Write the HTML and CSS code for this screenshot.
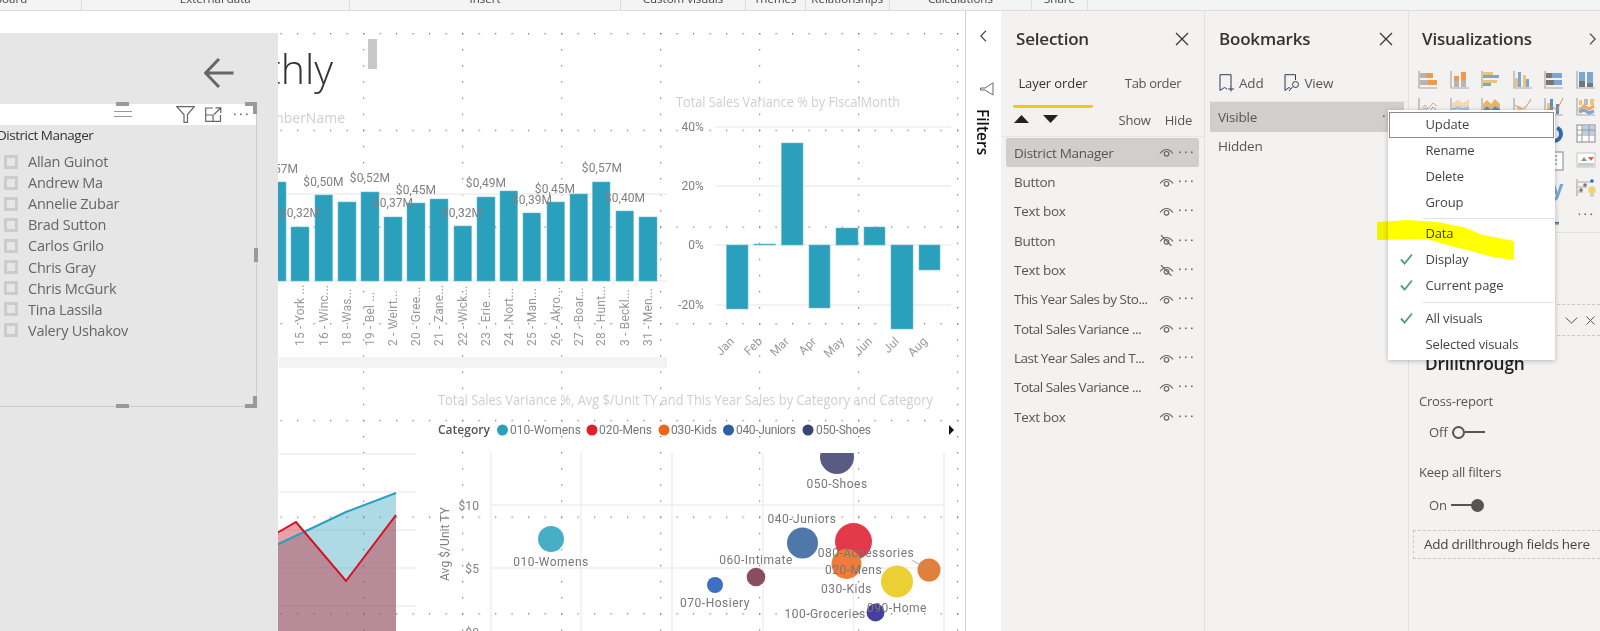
FILE: index.html
```html
<!DOCTYPE html>
<html lang="en">
<head>
<meta charset="utf-8">
<title>Power BI Desktop - Bookmarks</title>
<link rel="stylesheet" href="styles.css">
</head>
<body>
<svg class="defs" width="0" height="0" aria-hidden="true">
  <symbol id="eye" viewBox="0 0 15 11"><path d="M1 6.5Q7.5-1.5 14 6.5" fill="none" stroke="#666" stroke-width="1.1"/><circle cx="7.5" cy="6.8" r="2.3" fill="none" stroke="#666" stroke-width="1.1"/></symbol>
  <symbol id="eye-off" viewBox="0 0 15 11"><path d="M1 6.5Q7.5-1.5 14 6.5" fill="none" stroke="#666" stroke-width="1.1"/><circle cx="7.5" cy="6.8" r="2.3" fill="none" stroke="#666" stroke-width="1.1"/><path d="M2 0 12.5 11" stroke="#666" stroke-width="1.1"/></symbol>
  <symbol id="dots" viewBox="0 0 14 3"><rect x="0" y="0.5" width="1.6" height="1.6" fill="#666"/><rect x="6" y="0.5" width="1.6" height="1.6" fill="#666"/><rect x="12" y="0.5" width="1.6" height="1.6" fill="#666"/></symbol>
  <symbol id="close" viewBox="0 0 14 14"><path d="M1 1 13 13M13 1 1 13" stroke="#333" stroke-width="1.2" fill="none"/></symbol>
  <symbol id="check" viewBox="0 0 13 12"><path d="M1 6.5 4.6 10.5 12 1.5" stroke="#5c9c8a" stroke-width="1.9" fill="none"/></symbol>
</svg>

<header class="ribbon">
  <div class="rb rb-clip"><span>Clipboard</span></div>
  <div class="rb rb-ext"><span>External data</span></div>
  <div class="rb rb-ins"><span>Insert</span></div>
  <div class="rb rb-cus"><span>Custom visuals</span></div>
  <div class="rb rb-the"><span>Themes</span></div>
  <div class="rb rb-rel"><span>Relationships</span></div>
  <div class="rb rb-cal"><span>Calculations</span></div>
  <div class="rb rb-sha"><span>Share</span></div>
</header>

<main class="main">
  <section class="canvas">
    <svg class="report" width="965" height="620" viewBox="0 11 965 620">
      <defs>
        <pattern id="dotrow" x="264" y="33" width="16.5" height="96.7" patternUnits="userSpaceOnUse"><rect width="1.3" height="1.3" fill="#808080"/></pattern>
        <pattern id="dotcol" x="363" y="33" width="99" height="16.12" patternUnits="userSpaceOnUse"><rect width="1.3" height="1.3" fill="#808080"/></pattern>
        <clipPath id="plotclip"><rect x="480" y="453" width="470" height="178"/></clipPath>
      </defs>
      <rect x="264" y="33" width="696" height="598" fill="url(#dotrow)"/>
      <rect x="363" y="33" width="597" height="598" fill="url(#dotcol)"/>

      <rect class="scrollthumb" x="368" y="39" width="9" height="30"/>
      <text class="title-big" x="333" y="84" text-anchor="end">Monthly</text>
      <text class="vis-title" x="345" y="123" text-anchor="end">Sales by StoreNumberName</text>

      <!-- store bars -->
      <path class="grid" d="M279 194H667M279 281H667"/>
      <g class="bar">
        <rect x="268" y="182" width="18" height="99"/><rect x="291" y="227" width="18" height="54"/><rect x="315" y="195" width="17.5" height="86"/><rect x="338" y="202" width="18" height="79"/><rect x="361" y="192" width="18" height="89"/><rect x="384" y="217" width="18" height="64"/><rect x="407" y="203" width="18" height="78"/><rect x="430" y="199" width="18" height="82"/><rect x="454" y="226" width="17.5" height="55"/><rect x="477" y="197" width="18" height="84"/><rect x="500" y="191" width="17.5" height="90"/><rect x="523" y="213" width="17.5" height="68"/><rect x="547" y="202" width="17.5" height="79"/><rect x="570" y="194" width="17.5" height="87"/><rect x="592.5" y="182" width="17.5" height="99"/><rect x="616" y="211" width="17.5" height="70"/><rect x="639" y="217" width="18" height="64"/>
      </g>
      <g class="data-label" text-anchor="middle">
        <text x="278" y="173">$0,57M</text><text x="300" y="217">$0,32M</text><text x="323.5" y="186">$0,50M</text><text x="370" y="182">$0,52M</text><text x="393" y="207">$0,37M</text><text x="416" y="194">$0,45M</text><text x="462" y="217">$0,32M</text><text x="486" y="187">$0,49M</text><text x="532" y="204">$0,39M</text><text x="555" y="193">$0,45M</text><text x="602" y="172">$0,57M</text><text x="625" y="202">$0,40M</text>
      </g>
      <g class="axis-label">
        <text transform="translate(304 346) rotate(-90)">15 - York ...</text><text transform="translate(327.500 346) rotate(-90)">16 - Winc...</text><text transform="translate(351 346) rotate(-90)">18 - Was...</text><text transform="translate(374 346) rotate(-90)">19 - Bel ...</text><text transform="translate(397 346) rotate(-90)">2 - Weirt...</text><text transform="translate(420 346) rotate(-90)">20 - Gree...</text><text transform="translate(443 346) rotate(-90)">21 - Zane...</text><text transform="translate(466.500 346) rotate(-90)">22 - Wick...</text><text transform="translate(490 346) rotate(-90)">23 - Erie ...</text><text transform="translate(513 346) rotate(-90)">24 - Nort...</text><text transform="translate(536 346) rotate(-90)">25 - Man...</text><text transform="translate(559.500 346) rotate(-90)">26 - Akro...</text><text transform="translate(583 346) rotate(-90)">27 - Boar...</text><text transform="translate(605 346) rotate(-90)">28 - Hunt...</text><text transform="translate(629 346) rotate(-90)">3 - Beckl...</text><text transform="translate(652 346) rotate(-90)">31 - Men...</text>
      </g>
      <rect class="hscroll" x="279" y="357" width="388" height="11"/>

      <!-- variance by month -->
      <text class="vis-title" x="676" y="107" textLength="224" lengthAdjust="spacingAndGlyphs">Total Sales Variance % by FiscalMonth</text>
      <path class="grid" d="M715 127H951M715 186H951M715 245H951M715 305H951"/>
      <g class="data-label" text-anchor="end">
        <text x="704" y="131">40%</text><text x="704" y="190">20%</text><text x="704" y="249">0%</text><text x="704" y="309">-20%</text>
      </g>
      <g class="bar">
        <rect x="726.500" y="245" width="21.5" height="64"/><rect x="754" y="244" width="21.500" height="1"/><rect x="781.500" y="143" width="21.500" height="102"/><rect x="809" y="245" width="21" height="63"/><rect x="836" y="228" width="22" height="17"/><rect x="864" y="227" width="21" height="18"/><rect x="891" y="245" width="22" height="84"/><rect x="919" y="245" width="21" height="25"/>
      </g>
      <g class="data-label month-label" text-anchor="end">
        <text transform="translate(735 342) rotate(-45)">Jan</text><text transform="translate(763 342) rotate(-45)">Feb</text><text transform="translate(790 342) rotate(-45)">Mar</text><text transform="translate(817 342) rotate(-45)">Apr</text><text transform="translate(845 342) rotate(-45)">May</text><text transform="translate(873 342) rotate(-45)">Jun</text><text transform="translate(900 342) rotate(-45)">Jul</text><text transform="translate(928 342) rotate(-45)">Aug</text>
      </g>

      <!-- area chart -->
      <path class="grid" d="M279 454H416M279 492H416M279 530H416M279 568H416M279 606H416"/>
      <polygon class="area-teal" points="270,548 346,512 396,493 396,631 270,631"/>
      <polygon class="area-red" points="270,537 296,522 346,581 396,515 396,631 270,631"/>
      <polyline class="line-teal" points="270,548 346,512 396,493"/>
      <polyline class="line-red" points="270,537 296,522 346,581 396,515"/>

      <!-- scatter -->
      <text class="vis-title" x="438" y="405" textLength="495" lengthAdjust="spacingAndGlyphs">Total Sales Variance %, Avg $/Unit TY and This Year Sales by Category and Category</text>
      <text class="legend-head" x="438" y="434">Category</text>
      <circle cx="502.500" cy="430" r="5.500" fill="#2ba0bd"/><text class="legend" x="510" y="434" textLength="71">010-Womens</text>
      <circle cx="592" cy="430" r="5.500" fill="#e01f2d"/><text class="legend" x="599" y="434" textLength="53">020-Mens</text>
      <circle cx="664" cy="430" r="5.500" fill="#ee6518"/><text class="legend" x="671" y="434" textLength="46">030-Kids</text>
      <circle cx="728.500" cy="430" r="5.500" fill="#2f5f9e"/><text class="legend" x="736" y="434" textLength="60">040-Juniors</text>
      <circle cx="808" cy="430" r="5.500" fill="#3a4575"/><text class="legend" x="816" y="434" textLength="55">050-Shoes</text>
      <polygon points="949,425 954,430 949,435" fill="#111"/>
      <path class="grid" d="M491 453V631M581 453V631M672 453V631M763 453V631M853.500 453V631M944 453V631M491 505H944M491 568H944"/>
      <g class="data-label" text-anchor="end">
        <text x="479" y="510">$10</text><text x="479" y="573">$5</text><text x="479" y="637">$0</text>
      </g>
      <text class="data-label" transform="translate(449 581) rotate(-90)" textLength="74">Avg $/Unit TY</text>
      <g clip-path="url(#plotclip)">
        <circle cx="837" cy="457" r="17" fill="#5a5b83"/>
        <circle cx="551" cy="539" r="13" fill="#46aec6"/>
        <circle cx="802.500" cy="543" r="15.500" fill="#5077aa"/>
        <circle cx="853.500" cy="541.500" r="18.500" fill="#e23a48"/>
        <circle cx="846.500" cy="564" r="15" fill="#f07b3a"/>
        <circle cx="929" cy="570" r="11.500" fill="#e0803a"/>
        <circle cx="897" cy="581.500" r="16" fill="#eccf35"/>
        <circle cx="756" cy="577" r="9.300" fill="#8a4d5e"/>
        <circle cx="715" cy="585" r="8" fill="#3f6fc5"/>
        <circle cx="875.500" cy="612.500" r="9" fill="#453fa0"/>
      </g>
      <path d="M912 560 929 570" stroke="#999" stroke-width="0.800"/>
      <g class="bubble-label" text-anchor="middle">
        <text x="837" y="488">050-Shoes</text><text x="551" y="566">010-Womens</text><text x="802" y="523">040-Juniors</text><text x="756" y="564">060-Intimate</text><text x="866" y="557">080-Accessories</text><text x="853.500" y="574">020-Mens</text><text x="846.500" y="593">030-Kids</text><text x="715" y="607">070-Hosiery</text><text x="825" y="618">100-Groceries</text><text x="897" y="612">090-Home</text>
      </g>
    </svg>

    <div class="overlay">
      <svg class="back-arrow" width="30" height="30" viewBox="0 0 30 30"><path d="M15 1 1.500 15 15 29M1.500 15H29.500" fill="none" stroke="#666" stroke-width="3"/></svg>
      <div class="slicer">
        <div class="slicer-head">
          <svg class="grip" width="18" height="7" viewBox="0 0 18 7"><path d="M0 .5H18M0 5.500H18" stroke="#999" stroke-width="1"/></svg>
          <svg class="filter-ic" width="19" height="17" viewBox="0 0 19 17"><path d="M.7.7H18.300L11.500 8.500V16.300H8V8.500Z" fill="none" stroke="#666" stroke-width="1.200"/></svg>
          <svg class="focus-ic" width="17" height="15" viewBox="0 0 17 15"><path d="M15.500 8V14.300H.7V1H8M.7 8H8V14.300M10.500.8H15.800V6M15.800.8 9 7.500" fill="none" stroke="#666" stroke-width="1.200"/></svg>
          <svg class="more-ic" width="16" height="3" viewBox="0 0 14 3"><use href="#dots"/></svg>
        </div>
        <div class="slicer-title">District Manager</div>
        <ul class="slicer-list">
          <li><i></i>Allan Guinot</li>
          <li><i></i>Andrew Ma</li>
          <li><i></i>Annelie Zubar</li>
          <li><i></i>Brad Sutton</li>
          <li><i></i>Carlos Grilo</li>
          <li><i></i>Chris Gray</li>
          <li><i></i>Chris McGurk</li>
          <li><i></i>Tina Lassila</li>
          <li><i></i>Valery Ushakov</li>
        </ul>
        <b class="h h-top"></b><b class="h h-right"></b><b class="h h-bottom"></b>
        <b class="c c-tr1"></b><b class="c c-tr2"></b><b class="c c-br1"></b><b class="c c-br2"></b>
      </div>
    </div>
  </section>

  <aside class="rail">
    <svg class="rail-chev" width="7" height="12" viewBox="0 0 7 12"><path d="M6 .7.9 6 6 11.300" fill="none" stroke="#444" stroke-width="1.200"/></svg>
    <svg class="rail-filter" width="14" height="14" viewBox="0 0 14 14"><path d="M13 .8V13L5 8H.5V6H5Z" fill="none" stroke="#666" stroke-width="1"/></svg>
    <div class="rail-text">Filters</div>
  </aside>

  <section class="pane">
    <div class="pane-head"><h2>Selection</h2><svg class="x" width="14" height="14"><use href="#close"/></svg></div>
    <div class="tabs"><span class="tab tab-on">Layer order</span><span class="tab tab-off">Tab order</span></div>
    <div class="sel-tools">
      <svg class="tri" width="15" height="8" viewBox="0 0 15 8"><path d="M7.500 0 15 8H0Z" fill="#222"/></svg>
      <svg class="tri tri2" width="15" height="8" viewBox="0 0 15 8"><path d="M0 0H15L7.500 8Z" fill="#222"/></svg>
      <span class="show">Show</span><span class="hide">Hide</span>
    </div>
    <ul class="layers">
      <li class="on"><span>District Manager</span><svg class="eye" width="15" height="11"><use href="#eye"/></svg><svg class="dot3" width="14" height="3"><use href="#dots"/></svg></li>
      <li><span>Button</span><svg class="eye" width="15" height="11"><use href="#eye"/></svg><svg class="dot3" width="14" height="3"><use href="#dots"/></svg></li>
      <li><span>Text box</span><svg class="eye" width="15" height="11"><use href="#eye"/></svg><svg class="dot3" width="14" height="3"><use href="#dots"/></svg></li>
      <li><span>Button</span><svg class="eye" width="15" height="11"><use href="#eye-off"/></svg><svg class="dot3" width="14" height="3"><use href="#dots"/></svg></li>
      <li><span>Text box</span><svg class="eye" width="15" height="11"><use href="#eye-off"/></svg><svg class="dot3" width="14" height="3"><use href="#dots"/></svg></li>
      <li><span class="tight">This Year Sales by Sto...</span><svg class="eye" width="15" height="11"><use href="#eye"/></svg><svg class="dot3" width="14" height="3"><use href="#dots"/></svg></li>
      <li><span class="tight">Total Sales Variance ...</span><svg class="eye" width="15" height="11"><use href="#eye"/></svg><svg class="dot3" width="14" height="3"><use href="#dots"/></svg></li>
      <li><span class="tight">Last Year Sales and T...</span><svg class="eye" width="15" height="11"><use href="#eye"/></svg><svg class="dot3" width="14" height="3"><use href="#dots"/></svg></li>
      <li><span class="tight">Total Sales Variance ...</span><svg class="eye" width="15" height="11"><use href="#eye"/></svg><svg class="dot3" width="14" height="3"><use href="#dots"/></svg></li>
      <li><span>Text box</span><svg class="eye" width="15" height="11"><use href="#eye"/></svg><svg class="dot3" width="14" height="3"><use href="#dots"/></svg></li>
    </ul>
  </section>

  <section class="pane">
    <div class="pane-head pane-head-b"><h2>Bookmarks</h2><svg class="x" width="14" height="14"><use href="#close"/></svg></div>
    <div class="bm-tools">
      <svg width="15" height="18" viewBox="0 0 15 18"><path d="M1 16.500V.7H12V13M1 16.500 5.500 13.500 8 15M9 15H15M12 12.500V17.500" fill="none" stroke="#2b3a55" stroke-width="1"/></svg><span class="bm-add">Add</span>
      <svg class="bm-view-ic" width="16" height="18" viewBox="0 0 16 18"><path d="M1 16.500V.7H11.500V6M1 16.500 5 13.500 6.500 14.500M5 17 8.500 13" fill="none" stroke="#2b3a55" stroke-width="1"/><circle cx="11.500" cy="10.500" r="3" fill="none" stroke="#2b3a55" stroke-width="1"/></svg><span>View</span>
    </div>
    <ul class="bookmarks">
      <li class="on"><span>Visible</span><svg class="dot3" width="14" height="3"><use href="#dots"/></svg></li>
      <li><span>Hidden</span></li>
    </ul>
  </section>

  <section class="pane pane-viz">
    <div class="pane-head pane-head-v"><h2>Visualizations</h2><svg class="x" width="7" height="12" viewBox="0 0 7 12"><path d="M1 .7 6.100 6 1 11.300" fill="none" stroke="#444" stroke-width="1.200"/></svg></div>
    <div class="viz-grid">
      <svg viewBox="0 0 20 20"><path class="ax" d="M1 1V18H19"/><rect x="2" y="3" width="6" height="5" fill="#b5b5b5"/><rect x="8" y="3" width="7" height="5" fill="#ee9a50"/><rect x="2" y="10" width="8" height="5" fill="#b5b5b5"/><rect x="10" y="10" width="9" height="5" fill="#ee9a50"/></svg>
      <svg viewBox="0 0 20 20"><path class="ax" d="M1 1V18H19"/><rect x="4" y="11" width="5" height="6" fill="#b5b5b5"/><rect x="4" y="6" width="5" height="5" fill="#ee9a50"/><rect x="11" y="10" width="5" height="7" fill="#b5b5b5"/><rect x="11" y="2" width="5" height="8" fill="#ee9a50"/></svg>
      <svg viewBox="0 0 20 20"><path class="ax" d="M1 1V18"/><rect x="2" y="2" width="10" height="3" fill="#ecc27c"/><rect x="2" y="5" width="16" height="3" fill="#7da7d3"/><rect x="2" y="10" width="14" height="3" fill="#ecc27c"/><rect x="2" y="13" width="8" height="3" fill="#7da7d3"/></svg>
      <svg viewBox="0 0 20 20"><path class="ax" d="M1 1V18H19"/><rect x="2" y="8" width="3" height="9" fill="#ecc27c"/><rect x="5" y="2" width="3" height="15" fill="#7da7d3"/><rect x="10" y="5" width="3" height="12" fill="#ecc27c"/><rect x="13" y="9" width="3" height="8" fill="#7da7d3"/></svg>
      <svg viewBox="0 0 20 20"><path class="ax" d="M1 1V18H19"/><rect x="2" y="3" width="6" height="5" fill="#777"/><rect x="8" y="3" width="10" height="5" fill="#7da7d3"/><rect x="2" y="10" width="8" height="5" fill="#777"/><rect x="10" y="10" width="8" height="5" fill="#7da7d3"/></svg>
      <svg viewBox="0 0 20 20"><path class="ax" d="M1 1V18H19"/><rect x="3" y="2" width="6" height="9" fill="#7da7d3"/><rect x="3" y="11" width="6" height="6" fill="#777"/><rect x="11" y="2" width="6" height="11" fill="#7da7d3"/><rect x="11" y="13" width="6" height="4" fill="#777"/></svg>

      <svg viewBox="0 0 20 20"><path class="ax" d="M1 1V18H19"/><path d="M2 14 7 8 10 12 15 6 19 9" fill="none" stroke="#e3a878" stroke-width="1"/><path d="M2 16 7 11 11 15 15 10 19 14" fill="none" stroke="#7da7d3" stroke-width="1"/></svg>
      <svg viewBox="0 0 20 20"><path class="ax" d="M1 1V18H19"/><path d="M2 6 8 3 13 6 19 2V9L13 11 8 9 2 11Z" fill="#f3d9b1"/><path d="M2 11 8 9 13 11 19 9V13L13 15 8 12 2 15Z" fill="#a9c4e0"/></svg>
      <svg viewBox="0 0 20 20"><path class="ax" d="M1 1V18H19"/><path d="M2 7 6 3 10 7 14 2 19 7V12L14 9 10 13 6 9 2 13Z" fill="#eab560"/><path d="M2 13 6 9 10 13 14 9 19 12V17H2Z" fill="#5f8fc0"/></svg>
      <svg viewBox="0 0 20 20"><path class="ax" d="M1 1V18H19"/><rect x="4" y="9" width="4" height="8" fill="#f0c7a8"/><rect x="10" y="12" width="4" height="5" fill="#f0c7a8"/><path d="M2 8 8 12 13 10 18 2" fill="none" stroke="#e58a55" stroke-width="1"/></svg>
      <svg viewBox="0 0 20 20"><path class="ax" d="M1 1V18H19"/><rect x="3" y="6" width="3" height="11" fill="#ecc27c"/><rect x="6" y="2" width="3" height="15" fill="#5f8fc0"/><rect x="12" y="7" width="3" height="10" fill="#5f8fc0"/><path d="M2 14 9 10 13 13 19 1" fill="none" stroke="#e58a55" stroke-width="1"/></svg>
      <svg viewBox="0 0 20 20"><path class="ax" d="M1 1V18H19"/><rect x="3" y="3" width="3" height="5" fill="#ecc27c"/><rect x="8" y="2" width="4" height="6" fill="#bbb"/><rect x="14" y="2" width="4" height="6" fill="#ecc27c"/><path d="M3 13 8 9 13 12 18 9" stroke="#f0a860" stroke-width="3" fill="none"/><path d="M3 15 8 13 13 16 18 14" stroke="#7da7d3" stroke-width="3" fill="none"/></svg>

      <span></span><span></span><span></span><span></span>
      <svg viewBox="0 0 20 20"><circle cx="10" cy="10" r="7" fill="none" stroke="#2f6db0" stroke-width="4" stroke-dasharray="14 4"/></svg>
      <svg viewBox="0 0 20 20"><rect x="1" y="1" width="18" height="17" fill="#fff" stroke="#999" stroke-width="1.200"/><rect x="6" y="2" width="12" height="8" fill="#b7cfe8"/><path d="M1 6H19M1 11H19M6 1V18M13 1V18" stroke="#999" stroke-width="1"/></svg>

      <span></span><span></span><span></span><span></span>
      <svg viewBox="0 0 20 20"><rect x="1" y="1" width="18" height="18" fill="#fff" stroke="#999" stroke-width="1.200"/><path d="M9 5H13M9 9H13M9 13H13" stroke="#7da7d3" stroke-width="1.500"/></svg>
      <svg viewBox="0 0 20 20"><rect x="1" y="2" width="18" height="14" fill="#fff" stroke="#ccc" stroke-width="1.200"/><rect x="2" y="12" width="16" height="3.500" fill="#ccc"/><path d="M5 10 8 6 11 10Z" fill="#5fae7f"/><path d="M12 6H18L15 10Z" fill="#e0604f"/></svg>

      <span></span><span></span><span></span><span></span>
      <span class="py">Py</span>
      <svg viewBox="0 0 20 20"><path d="M1 1V18" class="ax"/><path d="M2 4H15M2 9H11M2 14H7" stroke="#aaa" fill="none"/><circle cx="16" cy="3" r="1.800" fill="#2f6db0"/><circle cx="9" cy="7" r="1.800" fill="#777"/><circle cx="5" cy="12" r="1.800" fill="#777"/><circle cx="16" cy="12" r="3.800" fill="#f0d277"/><rect x="14" y="16" width="4" height="2.500" fill="#ccc"/></svg>

      <span></span><span></span><span></span><span></span>
      <svg viewBox="0 0 20 20"><rect x="7" y="3" width="3" height="14" fill="#eee"/><rect x="12" y="1" width="3" height="16" fill="#eee"/><rect x="1" y="14" width="5" height="3" fill="#f2c811"/><rect x="1" y="17" width="14" height="1.500" fill="#2f6db0"/><rect x="1" y="18.500" width="14" height="1" fill="#3a9e6b"/></svg>
      <svg class="viz-more" viewBox="0 0 14 3"><use href="#dots"/></svg>
    </div>
    <div class="viz-divider"></div>
    <div class="drill-strip">
      <svg width="13" height="7" viewBox="0 0 13 7"><path d="M.7.7 6.500 6 12.300.7" fill="none" stroke="#555" stroke-width="1"/></svg>
      <svg width="9" height="9" viewBox="0 0 9 9"><path d="M.5.5 8.500 8.500M8.500.5.5 8.500" fill="none" stroke="#555" stroke-width="1"/></svg>
    </div>
    <h3 class="drill-title">Drillthrough</h3>
    <div class="field-label field-first">Cross-report</div>
    <div class="toggle"><span class="toggle-text">Off</span><i class="knob-off"></i><i class="track track-off"></i></div>
    <div class="field-label field-second">Keep all filters</div>
    <div class="toggle toggle-on"><span class="toggle-text">On</span><i class="track track-on"></i><i class="knob-on"></i></div>
    <div class="drop">Add drillthrough fields here</div>
  </section>

  <nav class="menu">
    <div class="item focus"><span class="slot"></span>Update</div>
    <div class="item"><span class="slot"></span>Rename</div>
    <div class="item"><span class="slot"></span>Delete</div>
    <div class="item"><span class="slot"></span>Group</div>
    <div class="sep sep-a"></div>
    <div class="item"><span class="slot"></span>Data</div>
    <div class="item"><svg class="slot" width="13" height="12"><use href="#check"/></svg>Display</div>
    <div class="item"><svg class="slot" width="13" height="12"><use href="#check"/></svg>Current page</div>
    <div class="sep sep-b"></div>
    <div class="item"><svg class="slot" width="13" height="12"><use href="#check"/></svg>All visuals</div>
    <div class="item"><span class="slot"></span>Selected visuals</div>
  </nav>
  <svg class="marker" width="140" height="42" viewBox="0 0 140 42"><polygon points="1,3 31,1 61,3 87,8 107,16 138,22 138,41 117,38 91,31 71,26 51,20 1,21" fill="#ffff00"/></svg>
</main>
</body>
</html>
```

FILE: styles.css
```css
* { box-sizing: border-box; }
html, body { margin: 0; padding: 0; height: 631px; overflow: hidden; background: #fff; }
body { font-family: "Open Sans", "Liberation Sans", sans-serif; color: #333; }
ul { list-style: none; margin: 0; padding: 0; }
h2, h3 { margin: 0; }
.defs { display: block; height: 0; }

.ribbon { display: flex; height: 11px; background: #f3f4f5; border-bottom: 1px solid #dcdcdc; overflow: hidden; font-size: 11.5px; color: #444; }
.rb { border-right: 1px solid #dcdcdc; text-align: center; line-height: 14px; height: 10px; }
.rb span { display: block; margin-top: -8px; }
.rb-clip { width: 81.5px; text-align: left; }
.rb-clip span { margin-left: -25px; }
.rb-ext { width: 268.5px; }
.rb-ins { width: 271px; }
.rb-cus { width: 125px; }
.rb-the { width: 59.5px; }
.rb-rel { width: 84.5px; }
.rb-cal { width: 142px; }
.rb-sha { width: 56px; }

.main { position: relative; display: flex; height: 620px; }
.canvas { position: relative; width: 965px; flex: none; overflow: hidden; }
.report { display: block; }
.report text { font-family: "Roboto", "Liberation Sans", sans-serif; }
.scrollthumb { fill: #c8c8c8; }
.report .title-big { font-family: "Open Sans", sans-serif; font-weight: 300; font-size: 41px; fill: #333; }
.report .vis-title { font-family: "Open Sans", sans-serif; font-size: 14px; fill: #cfcfcf; }
.grid { stroke: #eeeeee; stroke-width: 1.4; fill: none; }
.bar rect { fill: #2ba0bd; stroke: #6dbcd1; stroke-width: 0.6; }
.data-label { font-size: 12px; fill: #808080; letter-spacing: 0.1px; }
.month-label { fill: #999; }
.axis-label { font-size: 12px; fill: #999; letter-spacing: 0.2px; }
.hscroll { fill: #f3f3f3; }
.area-teal { fill: #2ba0bd; fill-opacity: 0.39; }
.area-red { fill: #c8202f; fill-opacity: 0.42; }
.line-teal { fill: none; stroke: #2ba0bd; stroke-width: 2; }
.line-red { fill: none; stroke: #d7101f; stroke-width: 2; }
.report .legend-head { font-family: "Open Sans", sans-serif; font-size: 12px; font-weight: 600; fill: #555; }
.legend { font-size: 12px; fill: #777; }
.bubble-label { font-size: 12px; fill: #777; letter-spacing: 0.5px; }

.overlay { position: absolute; left: 0; top: 22px; bottom: 0; width: 278px; background: #e6e6e6; }
.back-arrow { display: block; margin: 25px 0 0 204px; }
.slicer { position: relative; width: 257px; height: 303px; margin-top: 16px; border-right: 1px solid #ccc; border-bottom: 1px solid #ccc; }
.slicer-head { display: flex; align-items: center; height: 21px; background: #fff; }
.grip { margin-left: 114px; }
.filter-ic { margin-left: 44px; }
.focus-ic { margin-left: 10px; }
.more-ic { margin-left: 11px; }
.slicer-title { height: 26px; margin-left: -3px; font-size: 13.5px; line-height: 20px; color: #333; letter-spacing: -0.48px; white-space: nowrap; }
.slicer-list li { display: flex; align-items: center; gap: 10px; height: 21.1px; padding-left: 4px; font-size: 14.5px; color: #666; letter-spacing: -0.25px; }
.slicer-list i { display: block; width: 14px; height: 14px; border: 3px solid #ccc; }
.h, .c { position: absolute; background: #999; }
.h-top { left: 116px; top: -2px; width: 13px; height: 4px; }
.h-bottom { left: 116px; bottom: -2px; width: 13px; height: 4px; }
.h-right { right: -2px; top: 144px; width: 4px; height: 14px; }
.c-tr1 { right: -1px; top: -2px; width: 12px; height: 4px; }
.c-tr2 { right: -1px; top: -2px; width: 4px; height: 12px; }
.c-br1 { right: -1px; bottom: -2px; width: 12px; height: 4px; }
.c-br2 { right: -1px; bottom: -2px; width: 4px; height: 12px; }

.rail { width: 36px; flex: none; border-left: 1px solid #cfcfcf; background: #fff; display: flex; flex-direction: column; }
.rail-chev { margin: 19px 0 0 14px; }
.rail-filter { margin: 40px 0 0 14px; }
.rail-text { align-self: flex-start; writing-mode: vertical-rl; margin: 13px 0 0 9px; font-size: 15.5px; font-weight: 600; line-height: 16px; color: #111; }

.pane { width: 204px; flex: none; height: 620px; background: #f3f2f1; border-right: 1px solid #e1e1e1; border-left: 0; }
.pane-viz { flex: none; width: 191px; border-right: 0; position: relative; overflow: hidden; }
.pane-head { display: flex; justify-content: space-between; align-items: center; height: 40px; padding: 15px 15px 0 15px; }
.pane-head h2 { font-size: 17px; font-weight: 600; color: #333; line-height: 23px; letter-spacing: -0.2px; }
.pane-head-b { padding: 15px 15px 0 14px; }
.pane-head-v { padding: 15px 4px 0 13px; }

.tabs { display: flex; height: 57px; padding: 23px 0 0 12px; align-items: flex-start; font-size: 13px; line-height: 18px; }
.tab { display: block; width: 80px; height: 34px; text-align: center; white-space: nowrap; }
.tab-on { border-bottom: 3px solid #f2c811; border-radius: 2px; color: #333; letter-spacing: -0.1px; }
.tab-off { margin-left: 20px; color: #555; letter-spacing: -0.35px; }
.sel-tools { display: flex; align-items: center; height: 29px; padding: 0 12px 4px 13px; border-bottom: 1px solid #e7e7e7; font-size: 13px; color: #555; }
.tri { margin-top: -2px; }
.tri2 { margin-left: 14px; }
.show { margin-left: auto; letter-spacing: -0.2px; }
.hide { margin-left: 14px; letter-spacing: -0.2px; }
.layers { padding-top: 1px; }
.layers li { display: flex; align-items: center; height: 29.35px; margin: 0 5px; padding: 0 6.500px 0 8px; font-size: 13.5px; color: #555; letter-spacing: -0.28px; border-radius: 2px; }
.layers li span { flex: 1; white-space: nowrap; }
.layers li span.tight { letter-spacing: -0.5px; }
.layers li.on { background: #d0cfcd; }
.eye { margin: 0 5px 0 0; flex: none; }
.dot3 { margin-top: -1px; flex: none; }

.bm-tools { display: flex; align-items: center; height: 51px; padding: 14px 0 0 14px; border-bottom: 1px solid #e7e7e7; font-size: 13.5px; color: #555; letter-spacing: -0.2px; }
.bm-add { margin-left: 5px; }
.bm-view-ic { margin: 0 4px 0 21px; }
.bookmarks { padding-top: 0; }
.bookmarks li { display: flex; align-items: center; justify-content: space-between; height: 29.5px; margin: 0 0 0 5px; padding: 0 7px 0 8px; font-size: 13.5px; color: #555; letter-spacing: -0.2px; }
.bookmarks li.on { background: #d0cfcd; margin-right: 4px; }

.viz-grid { display: grid; grid-template-columns: repeat(6, 31.6px); grid-auto-rows: 27px; padding: 19px 0 0 9px; height: 181px; }
.viz-grid svg { width: 20px; height: 20px; display: block; }
.ax { fill: none; stroke: #a8a8a8; stroke-width: 1.2; }
.viz-grid .viz-more { width: 15px; height: 3px; margin: 8px 0 0 2px; }
.py { font-size: 21px; font-weight: 700; color: #7da7d3; line-height: 20px; margin-left: -6px; white-space: nowrap; }
.viz-divider { border-top: 1px solid #e1e1e1; height: 72px; }
.drill-strip { display: flex; align-items: center; justify-content: flex-end; gap: 8px; height: 32px; margin-left: 4px; padding-right: 5px; border-top: 1px dashed #c8c8c8; border-bottom: 1px dashed #c8c8c8; }
.drill-title { margin: 17px 0 0 16px; font-size: 17.3px; font-weight: 600; line-height: 22px; color: #222; letter-spacing: -0.2px; }
.field-label { margin-left: 10px; font-size: 13px; line-height: 18px; color: #555; letter-spacing: -0.2px; white-space: nowrap; }
.field-first { margin-top: 17px; }
.field-second { margin-top: 20px; }
.toggle { display: flex; align-items: center; height: 22px; margin: 11px 0 0 20px; font-size: 13px; color: #555; }
.toggle-on { margin-top: 13px; }
.toggle-text { width: 20px; }
.knob-off { display: block; width: 13px; height: 13px; border: 2.5px solid #555; border-radius: 50%; margin-left: 3px; }
.track { display: block; height: 1.5px; background: #555; }
.track-off { width: 20px; }
.toggle-on .toggle-text { width: 22px; }
.track-on { width: 21px; }
.knob-on { display: block; width: 13px; height: 13px; background: #555; border-radius: 50%; margin-left: -1px; }
.drop { margin: 14px 0 0 4px; height: 29px; padding-left: 10px; border: 1px dashed #c8c8c8; border-right: 0; font-size: 13.5px; line-height: 27px; color: #444; letter-spacing: -0.25px; white-space: nowrap; overflow: hidden; }

.menu { position: absolute; left: 1388px; top: 99px; width: 167px; height: 250px; padding: 2px 1px; background: #fff; box-shadow: 0 1px 5px rgba(0,0,0,.25); font-size: 13px; color: #444; letter-spacing: -0.15px; }
.item { display: flex; align-items: center; gap: 13px; height: 26px; padding: 0 0 2px 10.500px; white-space: nowrap; }
.slot { display: block; width: 13px; flex: none; }
.focus { outline: 1px solid #8a8a8a; outline-offset: -1px; }
.sep { margin-left: 34px; border-bottom: 1px solid #e1e1e1; }
.sep-a { height: 3px; margin-bottom: 2px; }
.sep-b { height: 4px; margin-bottom: 3px; }
.marker { position: absolute; left: 1376px; top: 208px; mix-blend-mode: multiply; }
```
